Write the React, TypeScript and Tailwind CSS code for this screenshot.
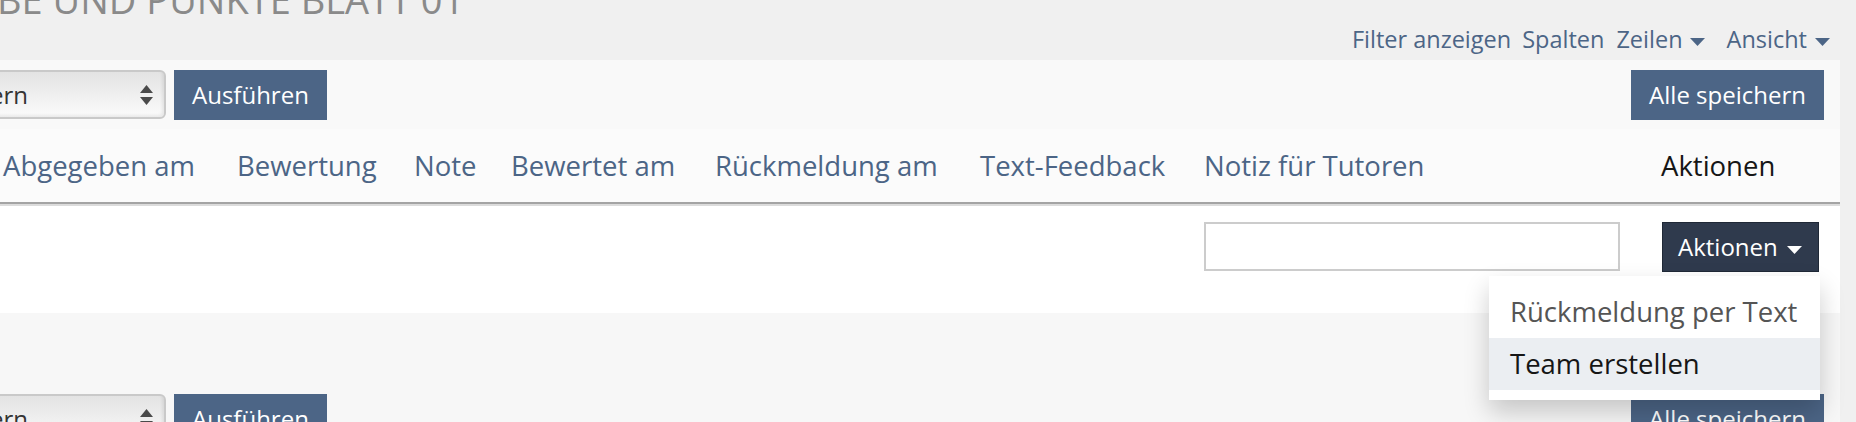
import React from 'react'

const cols = [
  { label: 'Abgegeben am', w: 'w-[234px]' },
  { label: 'Bewertung', w: 'w-[177px]' },
  { label: 'Note', w: 'w-[97px]' },
  { label: 'Bewertet am', w: 'w-[204px]' },
  { label: 'Rückmeldung am', w: 'w-[265px]' },
  { label: 'Text-Feedback', w: 'w-[224px]' },
  { label: 'Notiz für Tutoren', w: 'w-[458px]' },
]

function Caret({ className }: { className?: string }) {
  return (
    <svg width="15" height="8" viewBox="0 0 15 8" className={className} aria-hidden="true">
      <path d="M0 0h15L7.5 8z" fill="currentColor" />
    </svg>
  )
}

function SelectBox() {
  return (
    <div className="-ml-[34px] flex h-[49px] w-[200px] items-center justify-between rounded-[6px] border-2 border-[#c9c9c9] bg-linear-to-b from-[#e3e3e3] to-[#fbfbfb] pr-[11px] shadow-[inset_-2px_-2px_3px_rgba(0,0,0,0.07)]">
      <span className="pl-[22px] text-[24px] leading-[34px] text-[#333]">ern</span>
      <span className="flex flex-col gap-[4px] text-[#4a4a4a]">
        <svg width="13" height="8" viewBox="0 0 13 8" aria-hidden="true">
          <path d="M6.5 0L13 8H0z" fill="currentColor" />
        </svg>
        <svg width="13" height="8" viewBox="0 0 13 8" aria-hidden="true">
          <path d="M0 0h13L6.5 8z" fill="currentColor" />
        </svg>
      </span>
    </div>
  )
}

function Button({ children }: { children: React.ReactNode }) {
  return (
    <button className="h-[50px] bg-[#4c6586] px-[18px] text-[24px] leading-[34px] text-white">
      {children}
    </button>
  )
}

function Toolbar() {
  return (
    <div className="flex items-start justify-between pr-[16px]">
      <div className="flex gap-[8px]">
        <SelectBox />
        <Button>Ausführen</Button>
      </div>
      <Button>Alle speichern</Button>
    </div>
  )
}

export default function App() {
  return (
    <div className="h-[422px] w-[1856px] overflow-hidden bg-[#f0f0f0] font-['Open_Sans',sans-serif]">
      <div className="w-[1840px]">
        {/* Page title + table links */}
        <div className="flex h-[60px] justify-between">
          <h1 className="-mt-[20px] -ml-[3px] whitespace-nowrap text-[38px] font-normal leading-[38px] text-[#8a8a8a]">
            BE UND PUNKTE BLATT 01
          </h1>
          <div className="flex items-center self-end pb-[4px] pr-[10px] text-[23.5px] leading-[34px] text-[#4c6586]">
            <span>Filter anzeigen</span>
            <span className="ml-[11px]">Spalten</span>
            <span className="ml-[12px] flex items-center gap-[7px]">
              Zeilen
              <Caret className="mt-[6px]" />
            </span>
            <span className="ml-[22px] flex items-center gap-[8px]">
              Ansicht
              <Caret className="mt-[6px]" />
            </span>
          </div>
        </div>

        {/* Top toolbar */}
        <div className="h-[69px] bg-[#f9f9f9] pt-[10px]">
          <Toolbar />
        </div>

        {/* Table header */}
        <div className="-ml-[16px] flex h-[73px] items-center bg-[#fbfbfb] text-[27.5px] leading-[40px]">
          {cols.map((c) => (
            <div key={c.label} className={`${c.w} shrink-0 whitespace-nowrap pl-[19px] text-[#4c6586]`}>
              {c.label}
            </div>
          ))}
          <div className="w-[197px] shrink-0 pl-[18px] text-[#161616]">Aktionen</div>
        </div>
        <div className="h-[2px] bg-[#a4a4a4]" />
        <div className="h-[2px] bg-[#dcdcdc]" />

        {/* Row */}
        <div className="-ml-[16px] flex h-[107px] bg-white pt-[16px]">
          {cols.slice(0, 6).map((c) => (
            <div key={c.label} className={`${c.w} shrink-0`} />
          ))}
          <div className="w-[458px] shrink-0 pl-[19px]">
            <div className="h-[49px] w-[416px] border-2 border-[#cccccc] bg-white" />
          </div>
          <div className="w-[197px] shrink-0 pl-[19px]">
            <div className="relative w-[157px]">
              <button className="flex h-[50px] w-[157px] items-center gap-[9px] border border-[#1f2836] bg-[#2f3a4d] px-[15px] text-[24px] leading-[34px] text-white">
                Aktionen
                <Caret className="mt-[5px]" />
              </button>
              <div className="absolute -right-[1px] top-[54px] z-10 w-[331px] bg-white py-[10px] text-[27.5px] leading-[40px] shadow-[0_12px_24px_rgba(0,0,0,0.2)]">
                <div className="whitespace-nowrap px-[21px] py-[6px] text-[#555555]">Rückmeldung per Text</div>
                <div className="whitespace-nowrap bg-[#ebeef2] px-[21px] py-[6px] text-[#161616]">Team erstellen</div>
              </div>
            </div>
          </div>
        </div>

        {/* Footer + bottom toolbar */}
        <div className="h-[109px] bg-[#f7f7f7] pt-[81px]">
          <Toolbar />
        </div>
      </div>
    </div>
  )
}
